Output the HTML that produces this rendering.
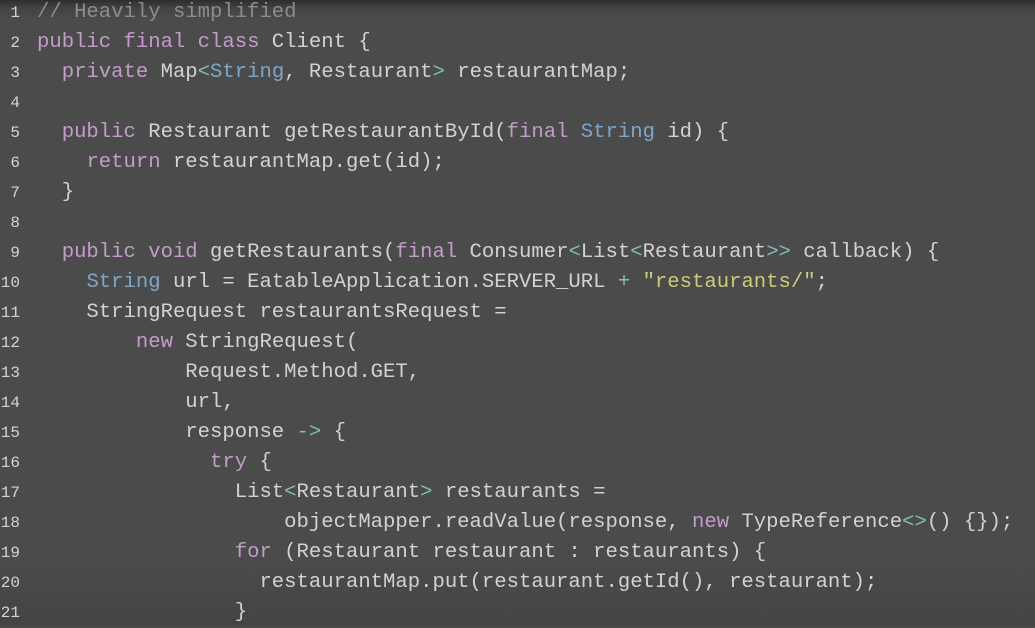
<!DOCTYPE html>
<html><head><style>
html,body{margin:0;padding:0;width:1035px;height:625px;overflow:hidden;background:#4a4a4a}
body{background:linear-gradient(#2e2e2e 0px,#434343 8px,#4b4b4b 20px,#4b4b4b 560px,#444 625px)}
.l{position:absolute;left:0;height:30px;line-height:30px;white-space:pre;font-family:"Liberation Mono",monospace;font-size:20.6px;color:#d2d2d2}
.n{position:absolute;left:0;width:20px;text-align:right;font-size:16px;color:#d4d4d4}
.c{position:absolute;left:37px}
.k{color:#c49bcb}.t{color:#7fa6c8}.s{color:#cccc7c}.m{color:#8c8c8c}.o{color:#7fc0b8}
</style></head><body>
<div class="l" style="top:-2px"><span class="n">1</span><span class="c"><span class="m">// Heavily simplified</span></span></div>
<div class="l" style="top:28px"><span class="n">2</span><span class="c"><span class="k">public final class</span> Client {</span></div>
<div class="l" style="top:58px"><span class="n">3</span><span class="c">  <span class="k">private</span> Map<span class="o">&lt;</span><span class="t">String</span>, Restaurant<span class="o">&gt;</span> restaurantMap;</span></div>
<div class="l" style="top:88px"><span class="n">4</span></div>
<div class="l" style="top:118px"><span class="n">5</span><span class="c">  <span class="k">public</span> Restaurant getRestaurantById(<span class="k">final</span> <span class="t">String</span> id) {</span></div>
<div class="l" style="top:148px"><span class="n">6</span><span class="c">    <span class="k">return</span> restaurantMap.get(id);</span></div>
<div class="l" style="top:178px"><span class="n">7</span><span class="c">  }</span></div>
<div class="l" style="top:208px"><span class="n">8</span></div>
<div class="l" style="top:238px"><span class="n">9</span><span class="c">  <span class="k">public void</span> getRestaurants(<span class="k">final</span> Consumer<span class="o">&lt;</span>List<span class="o">&lt;</span>Restaurant<span class="o">&gt;&gt;</span> callback) {</span></div>
<div class="l" style="top:268px"><span class="n">10</span><span class="c">    <span class="t">String</span> url = EatableApplication.SERVER_URL <span class="o">+</span> <span class="s">"restaurants/"</span>;</span></div>
<div class="l" style="top:298px"><span class="n">11</span><span class="c">    StringRequest restaurantsRequest =</span></div>
<div class="l" style="top:328px"><span class="n">12</span><span class="c">        <span class="k">new</span> StringRequest(</span></div>
<div class="l" style="top:358px"><span class="n">13</span><span class="c">            Request.Method.GET,</span></div>
<div class="l" style="top:388px"><span class="n">14</span><span class="c">            url,</span></div>
<div class="l" style="top:418px"><span class="n">15</span><span class="c">            response <span class="o">-&gt;</span> {</span></div>
<div class="l" style="top:448px"><span class="n">16</span><span class="c">              <span class="k">try</span> {</span></div>
<div class="l" style="top:478px"><span class="n">17</span><span class="c">                List<span class="o">&lt;</span>Restaurant<span class="o">&gt;</span> restaurants =</span></div>
<div class="l" style="top:508px"><span class="n">18</span><span class="c">                    objectMapper.readValue(response, <span class="k">new</span> TypeReference<span class="o">&lt;&gt;</span>() {});</span></div>
<div class="l" style="top:538px"><span class="n">19</span><span class="c">                <span class="k">for</span> (Restaurant restaurant : restaurants) {</span></div>
<div class="l" style="top:568px"><span class="n">20</span><span class="c">                  restaurantMap.put(restaurant.getId(), restaurant);</span></div>
<div class="l" style="top:598px"><span class="n">21</span><span class="c">                }</span></div>
</body></html>
